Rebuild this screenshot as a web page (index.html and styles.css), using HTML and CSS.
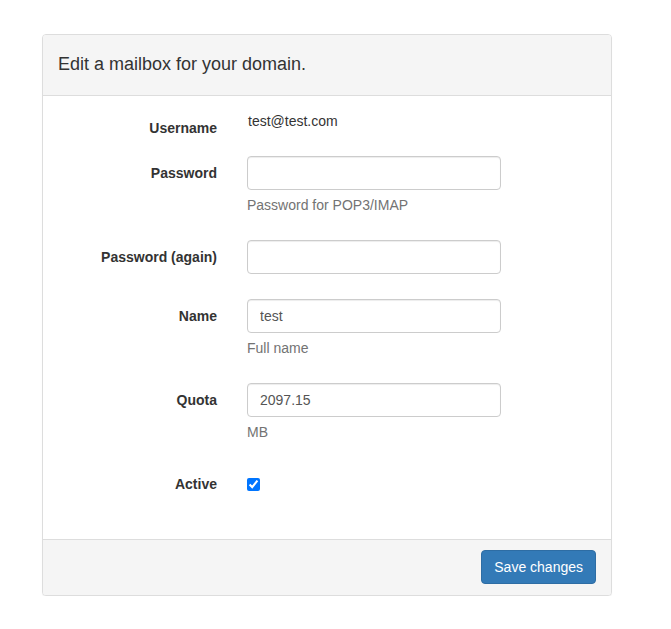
FILE: index.html
```html
<!DOCTYPE html>
<html>
<head>
<meta charset="utf-8">
<link rel="stylesheet" href="styles.css">
</head>
<body>
<div class="panel">
  <div class="panel-heading">
    <h3 class="panel-title">Edit a mailbox for your domain.</h3>
  </div>
  <form class="panel-body">
    <div class="form-group static">
      <label class="control-label">Username</label>
      <div class="control"><p class="static-value">test@test.com</p></div>
    </div>
    <div class="form-group">
      <label class="control-label">Password</label>
      <div class="control">
        <input class="form-control" type="password">
        <span class="help-block">Password for POP3/IMAP</span>
      </div>
    </div>
    <div class="form-group">
      <label class="control-label">Password (again)</label>
      <div class="control">
        <input class="form-control" type="password">
      </div>
    </div>
    <div class="form-group">
      <label class="control-label">Name</label>
      <div class="control">
        <input class="form-control" type="text" value="test">
        <span class="help-block">Full name</span>
      </div>
    </div>
    <div class="form-group">
      <label class="control-label">Quota</label>
      <div class="control">
        <input class="form-control" type="text" value="2097.15">
        <span class="help-block">MB</span>
      </div>
    </div>
    <div class="form-group last">
      <label class="control-label">Active</label>
      <div class="control">
        <input class="check" type="checkbox" checked>
      </div>
    </div>
  </form>
  <div class="panel-footer">
    <button class="btn" type="button">Save changes</button>
  </div>
</div>
</body>
</html>
```

FILE: styles.css
```css
* { box-sizing: border-box; }
html, body { margin: 0; padding: 0; background: #fff; }
body {
  font-family: "Liberation Sans", Arial, sans-serif;
  font-size: 14px;
  line-height: 20px;
  color: #333;
}
.panel {
  margin: 34px 0 0 42px;
  width: 570px;
  border: 1px solid #ddd;
  border-radius: 4px;
  box-shadow: 0 1px 1px rgba(0,0,0,.05);
  background: #fff;
}
.panel-heading {
  background: #f5f5f5;
  border-bottom: 1px solid #ddd;
  border-radius: 3px 3px 0 0;
  padding: 19px 15px 21px;
  height: 61px;
}
.panel-title {
  margin: 0;
  font-size: 18px;
  font-weight: normal;
  line-height: 20px;
  color: #333;
}
.panel-body {
  display: flex;
  flex-direction: column;
  padding: 15px 15px 45px;
  margin: 0;
}
.form-group {
  display: flex;
  gap: 30px;
  margin-bottom: 25px;
}
.form-group.static { margin-bottom: 18px; }
.form-group.last { margin-bottom: 0; }
.control-label {
  width: 159px;
  flex: none;
  text-align: right;
  font-weight: bold;
  padding-top: 7px;
}
.control {
  display: flex;
  flex-direction: column;
  align-items: flex-start;
}
.static-value {
  margin: 0;
  padding-left: 1px;
}
.form-control {
  display: block;
  width: 254px;
  height: 34px;
  padding: 6px 12px;
  margin: 0;
  font-family: inherit;
  font-size: 14px;
  line-height: 20px;
  color: #555;
  background: #fff;
  border: 1px solid #ccc;
  border-radius: 4px;
  box-shadow: inset 0 1px 1px rgba(0,0,0,.075);
}
.help-block {
  display: block;
  margin-top: 5px;
  color: #737373;
}
.check {
  width: 13px;
  height: 13px;
  margin: 11px 0 0 0;
}
.panel-footer {
  background: #f5f5f5;
  border-top: 1px solid #ddd;
  border-radius: 0 0 3px 3px;
  padding: 10px 15px 11px 15px;
  display: flex;
  justify-content: flex-end;
}
.btn {
  height: 34px;
  padding: 6px 12px;
  font-family: inherit;
  font-size: 14px;
  line-height: 20px;
  color: #fff;
  background: #337ab7;
  border: 1px solid #2e6da4;
  border-radius: 4px;
  cursor: pointer;
}
```
